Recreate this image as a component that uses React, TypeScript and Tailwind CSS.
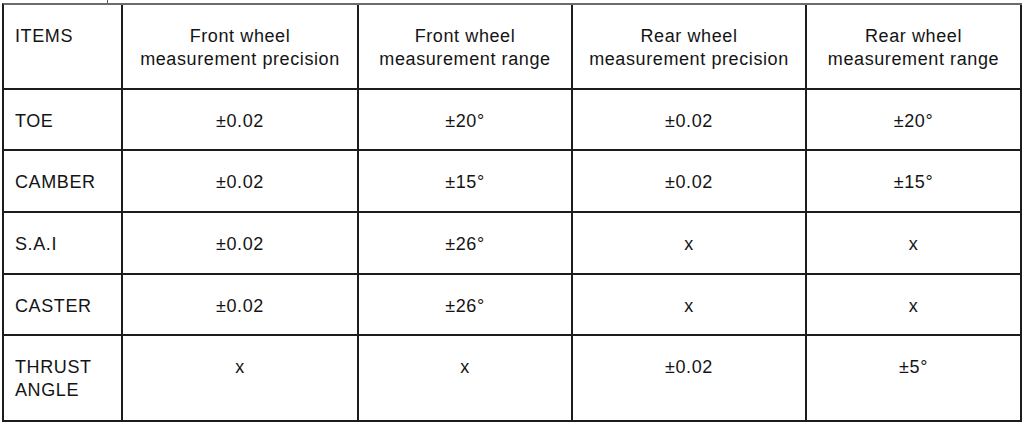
const headers = [
  "ITEMS",
  "Front wheel\nmeasurement precision",
  "Front wheel\nmeasurement range",
  "Rear wheel\nmeasurement precision",
  "Rear wheel\nmeasurement range",
];

const rows = [
  { name: "TOE", cells: ["±0.02", "±20°", "±0.02", "±20°"], h: "h-[61px]" },
  { name: "CAMBER", cells: ["±0.02", "±15°", "±0.02", "±15°"], h: "h-[62px]" },
  { name: "S.A.I", cells: ["±0.02", "±26°", "x", "x"], h: "h-[62px]" },
  { name: "CASTER", cells: ["±0.02", "±26°", "x", "x"], h: "h-[61px]" },
  { name: "THRUST\nANGLE", cells: ["x", "x", "±0.02", "±5°"], h: "h-[86px]" },
];

export default function App() {
  return (
    <div className="w-[1025px] h-[426px] bg-white overflow-hidden font-['Liberation_Sans',Arial,sans-serif] text-[18px] leading-[23px] tracking-[0.6px] text-[#141414]">
      {/* cut-off text stroke above the table */}
      <div className="h-[3px] flex">
        <div className="ml-[107px] w-px h-[3px] bg-[#555]" />
      </div>

      <div className="ml-[2px] w-[1020px] grid grid-cols-[119px_236px_214px_234px_215px] border-l-2 border-t-2 border-l-[#1c1c1c] border-t-[#6b6b6b]">
        {headers.map((h, i) => (
          <div
            key={h}
            className={`h-[85px] border-r-2 border-b-2 border-[#1c1c1c] pt-[20px] whitespace-pre-line ${
              i === 0 ? "pl-[11px] text-left" : "text-center"
            }`}
          >
            {h}
          </div>
        ))}

        {rows.map((r) => (
          <div key={r.name} className="contents">
            <div className={`${r.h} border-r-2 border-b-2 border-[#1c1c1c] pt-[20px] pl-[11px] whitespace-pre-line`}>
              {r.name}
            </div>
            {r.cells.map((c, j) => (
              <div key={j} className={`${r.h} border-r-2 border-b-2 border-[#1c1c1c] pt-[20px] text-center`}>
                {c}
              </div>
            ))}
          </div>
        ))}
      </div>
    </div>
  );
}
